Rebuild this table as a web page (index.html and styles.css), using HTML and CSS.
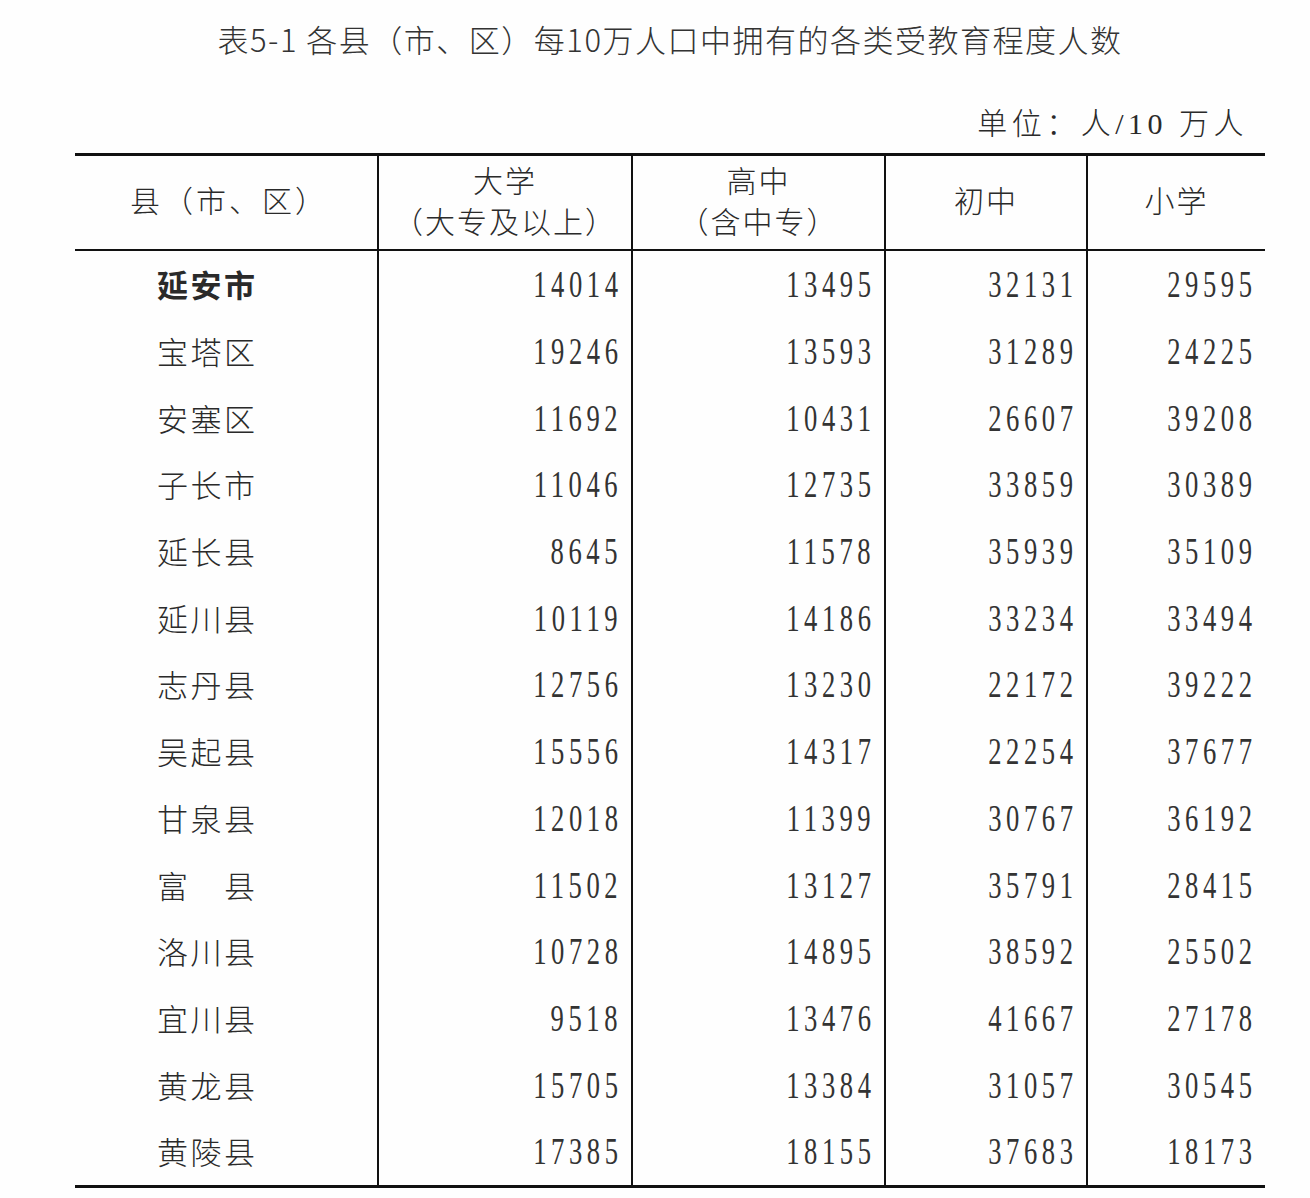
FILE: index.html
```
<!DOCTYPE html>
<html lang="zh-CN">
<head>
<meta charset="utf-8">
<title>表5-1</title>
<link rel="stylesheet" href="styles.css">
</head>
<body>
<div class="page">
  <h1 class="title">表5-1 各县（市、区）每10万人口中拥有的各类受教育程度人数</h1>
  <div class="unit">单位：人/10 万人</div>
  <table class="data">
    <colgroup>
      <col class="c1"><col class="c2"><col class="c3"><col class="c4"><col class="c5">
    </colgroup>
    <thead>
      <tr>
        <th class="name-h">县（市、区）</th>
        <th>大学<br>（大专及以上）</th>
        <th>高中<br>（含中专）</th>
        <th>初中</th>
        <th>小学</th>
      </tr>
    </thead>
    <tbody>
      <tr class="total"><td class="name">延安市</td><td><span class="num">14014</span></td><td><span class="num">13495</span></td><td><span class="num">32131</span></td><td><span class="num">29595</span></td></tr>
      <tr><td class="name">宝塔区</td><td><span class="num">19246</span></td><td><span class="num">13593</span></td><td><span class="num">31289</span></td><td><span class="num">24225</span></td></tr>
      <tr><td class="name">安塞区</td><td><span class="num">11692</span></td><td><span class="num">10431</span></td><td><span class="num">26607</span></td><td><span class="num">39208</span></td></tr>
      <tr><td class="name">子长市</td><td><span class="num">11046</span></td><td><span class="num">12735</span></td><td><span class="num">33859</span></td><td><span class="num">30389</span></td></tr>
      <tr><td class="name">延长县</td><td><span class="num">8645</span></td><td><span class="num">11578</span></td><td><span class="num">35939</span></td><td><span class="num">35109</span></td></tr>
      <tr><td class="name">延川县</td><td><span class="num">10119</span></td><td><span class="num">14186</span></td><td><span class="num">33234</span></td><td><span class="num">33494</span></td></tr>
      <tr><td class="name">志丹县</td><td><span class="num">12756</span></td><td><span class="num">13230</span></td><td><span class="num">22172</span></td><td><span class="num">39222</span></td></tr>
      <tr><td class="name">吴起县</td><td><span class="num">15556</span></td><td><span class="num">14317</span></td><td><span class="num">22254</span></td><td><span class="num">37677</span></td></tr>
      <tr><td class="name">甘泉县</td><td><span class="num">12018</span></td><td><span class="num">11399</span></td><td><span class="num">30767</span></td><td><span class="num">36192</span></td></tr>
      <tr><td class="name">富　县</td><td><span class="num">11502</span></td><td><span class="num">13127</span></td><td><span class="num">35791</span></td><td><span class="num">28415</span></td></tr>
      <tr><td class="name">洛川县</td><td><span class="num">10728</span></td><td><span class="num">14895</span></td><td><span class="num">38592</span></td><td><span class="num">25502</span></td></tr>
      <tr><td class="name">宜川县</td><td><span class="num">9518</span></td><td><span class="num">13476</span></td><td><span class="num">41667</span></td><td><span class="num">27178</span></td></tr>
      <tr><td class="name">黄龙县</td><td><span class="num">15705</span></td><td><span class="num">13384</span></td><td><span class="num">31057</span></td><td><span class="num">30545</span></td></tr>
      <tr><td class="name">黄陵县</td><td><span class="num">17385</span></td><td><span class="num">18155</span></td><td><span class="num">37683</span></td><td><span class="num">18173</span></td></tr>
    </tbody>
  </table>
</div>
</body>
</html>
```

FILE: styles.css
```
html, body {
  margin: 0;
  padding: 0;
  background: #fefefe;
}
.page {
  width: 1310px;
  height: 1198px;
  padding-top: 19px;
  box-sizing: border-box;
  color: #2a2a2a;
}
.title {
  margin: 0;
  padding-left: 30px;
  font-family: "Noto Sans CJK SC", sans-serif;
  font-weight: 300;
  font-size: 31px;
  line-height: 40px;
  text-align: center;
  letter-spacing: 1.5px;
  color: #333;
}
.unit {
  margin-top: 47px;
  width: 1248px;
  text-align: right;
  font-family: "Liberation Serif", "Noto Sans CJK SC", serif;
  font-weight: 300;
  font-size: 30px;
  line-height: 36px;
  letter-spacing: 4.5px;
  color: #2a2a2a;
}
.data {
  margin: 11px 0 0 75px;
  width: 1190px;
  table-layout: fixed;
  border-collapse: collapse;
  color: #2a2a2a;
}
.c1 { width: 303px; }
.c2 { width: 254px; }
.c3 { width: 253px; }
.c4 { width: 202px; }
.c5 { width: 178px; }
.data thead tr {
  border-top: 3px solid #111;
  border-bottom: 2px solid #111;
}
.data th {
  height: 87px;
  padding: 0 0 6px 0;
  font-family: "Noto Sans CJK SC", sans-serif;
  font-weight: 300;
  font-size: 30px;
  line-height: 41px;
  letter-spacing: 2px;
  text-align: center;
  vertical-align: middle;
}
.data th + th,
.data td + td {
  border-left: 2px solid #111;
}
.data th.name-h {
  letter-spacing: 3px;
  padding-left: 6px;
}
.data td {
  height: 66.7px;
  padding: 0 9px 0 0;
  font-family: "Liberation Serif", serif;
  font-size: 38px;
  line-height: 40px;
  text-align: right;
  vertical-align: middle;
  color: #333;
}
.num {
  display: inline-block;
  letter-spacing: 6.5px;
  transform: scaleX(0.7);
  transform-origin: right center;
}
.data td.name {
  padding: 0 0 0 82px;
  text-align: left;
  font-family: "Noto Sans CJK SC", sans-serif;
  font-weight: 300;
  font-size: 31px;
  letter-spacing: 2.5px;
  color: #2a2a2a;
}
.data tr.total td.name {
  font-weight: 700;
}
.data tbody tr:last-child {
  border-bottom: 3px solid #111;
}
```
